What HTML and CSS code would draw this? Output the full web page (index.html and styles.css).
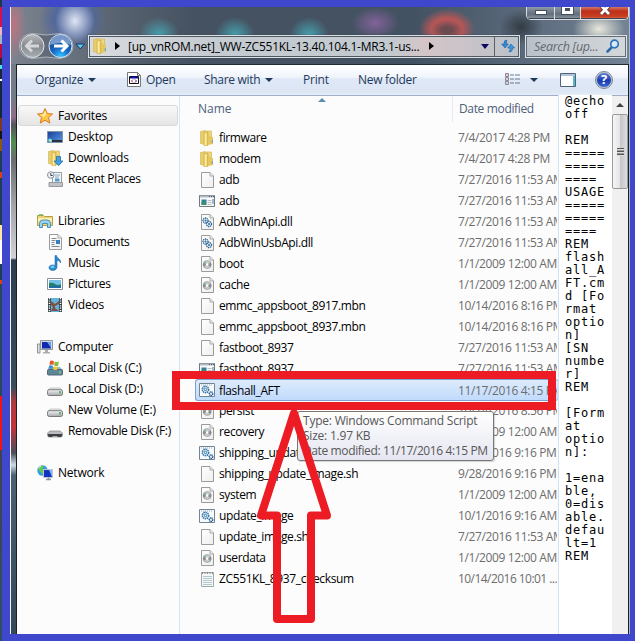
FILE: index.html
```html
<!DOCTYPE html>
<html lang="en">
<head>
<meta charset="utf-8">
<title>Explorer</title>
<link rel="stylesheet" href="styles.css">
</head>
<body>
<svg class="defs" width="0" height="0">
  <defs>
    <linearGradient id="gold" x1="0" x2="1"><stop offset="0" stop-color="#ecd477"/><stop offset=".45" stop-color="#fff0a8"/><stop offset="1" stop-color="#d9b440"/></linearGradient>
    <linearGradient id="paper" x1="0" y1="0" x2="1" y2="1"><stop offset="0" stop-color="#fff"/><stop offset="1" stop-color="#eee"/></linearGradient>
    <linearGradient id="sky" x1="0" y1="0" x2="1" y2="1"><stop offset="0" stop-color="#173d94"/><stop offset="1" stop-color="#5a9bea"/></linearGradient>
    <radialGradient id="orb" cx=".5" cy=".95" r=".85"><stop offset="0" stop-color="#35c5ff"/><stop offset=".45" stop-color="#1767c4"/><stop offset="1" stop-color="#164087"/></radialGradient>
    <linearGradient id="orbgray" x1="0" y1="0" x2="0" y2="1"><stop offset="0" stop-color="#b5b9bd"/><stop offset=".5" stop-color="#858a8f"/><stop offset="1" stop-color="#a9aeb2"/></linearGradient>
    <linearGradient id="disk" x1="0" y1="0" x2="0" y2="1"><stop offset="0" stop-color="#f4f4f6"/><stop offset="1" stop-color="#a5a7ac"/></linearGradient>
    <symbol id="folder" viewBox="0 0 16 16"><path d="M1.500 1.500 6 .5v14l-4.500-1z" fill="#e8cd6c" stroke="#d2b052" stroke-width=".6"/><path d="M6 1h6.500v12.500H6z" fill="#efd97f" stroke="#cfae4d" stroke-width=".6"/><path d="M5 3l4-1v13.300l-4 .5z" fill="url(#gold)" stroke="#c9a640" stroke-width=".6"/><path d="M12.500 7h1.500v7l-5 1V4z" fill="#e6c75f"/><path d="M13.300 10v3" stroke="#56a4d8"/></symbol>
    <symbol id="file" viewBox="0 0 16 16"><path d="M2.500.5h8.500l3.500 3.500v11.500h-12z" fill="url(#paper)" stroke="#9b9b9b"/><path d="M11 .5v3.500h3.500" fill="#eee" stroke="#a8a8a8"/></symbol>
    <symbol id="app" viewBox="0 0 16 16"><path d="M.5 2.500h15v11H.5z" fill="#fafafa" stroke="#6e7980"/><path d="M1 3.500h14" stroke="#b4bdc6" stroke-width="2"/><path d="M10 3.500h1m1 0h1m1 0h1" stroke="#556"/><path d="M2.500 6.500h5v5.500h-5z" fill="#347e9a"/><path d="M2.500 9h4v3h-4z" fill="#3c8e65"/><path d="M8.500 7.500h4m-4 2h4m-4 2h4" stroke="#bbb"/><path d="M14 6v5" stroke="#3a7db4"/></symbol>
    <symbol id="dll" viewBox="0 0 16 16"><use href="#file"/><g fill="#e8f3fa" stroke="#235c8e"><circle cx="6.500" cy="6.500" r="2.500" stroke-dasharray="1.200 .6" stroke-width="1.300"/><circle cx="10" cy="10" r="2.500" stroke-dasharray="1.200 .6" stroke-width="1.300"/><circle cx="6.500" cy="6.500" r=".6"/><circle cx="10" cy="10" r=".6"/></g></symbol>
    <symbol id="img" viewBox="0 0 16 16"><use href="#file"/><circle cx="8.200" cy="8.500" r="4" fill="#c8cacb" stroke="#999c9c" stroke-width=".7"/><path d="M8 8.500 4.800 6.200a4 4 0 0 0 0 4.500zM8 8.500l3.800-2a4 4 0 0 1-.4 4.500z" fill="#8a908d"/><path d="M8 8 6 5a4 4 0 0 0-1.500 1z" fill="#7fc58a"/><circle cx="8.200" cy="8.500" r="1.300" fill="#fff"/></symbol>
    <symbol id="cmd" viewBox="0 0 16 16"><path d="M.5 1.500h15v13H.5z" fill="#f8fbfd" stroke="#758493"/><path d="M2 3h12" stroke="#9aabba" stroke-dasharray="1 1"/><g fill="#d8ebf6" stroke="#3275a4"><circle cx="6.500" cy="7.500" r="3.200" stroke-width="1.500" stroke-dasharray="1.500 .6"/><circle cx="6.500" cy="7.500" r="1.200" fill="#fff"/><circle cx="12" cy="11.700" r="1.800" stroke="#24548a" stroke-width="1.300" stroke-dasharray="1.200 .4"/></g></symbol>
    <symbol id="txt" viewBox="0 0 16 16"><path d="M2.500 1.500h12v14h-12z" fill="#f3f7f8" stroke="#a2a8aa"/><path d="M3 2h11" stroke="#888" stroke-width="2" stroke-dasharray="1 1.500"/><path d="M4 5.500h9m-9 2h9m-9 2h9m-9 2h9m-9 2h9" stroke="#b4c8d0"/></symbol>
    <symbol id="star" viewBox="0 0 16 16"><path d="M8 .6 10.200 5.500 15.500 6l-4 3.600 1.300 5.500L8 12.200l-4.800 2.900 1.300-5.500L.5 6l5.300-.5z" fill="#ffc646" stroke="#d9791c" stroke-linejoin="round"/><path d="m8 2.500 1.300 3.800L7 9 3 6.700l3.400-.4z" fill="#fff0a6"/></symbol>
    <symbol id="desktop" viewBox="0 0 16 16"><path d="M.5 2.500h15v11H.5z" fill="url(#sky)" stroke="#8394a8"/><path d="M1 12h14" stroke="#28333f" stroke-width="2"/><circle cx="3" cy="11.500" r="2" fill="#59c5e6"/><path d="M2 11h2v2" stroke="#e6f6a0" fill="none"/></symbol>
    <symbol id="down" viewBox="0 0 16 16"><use href="#folder"/><path d="M9.500 6.500h4V11H16l-4.500 4.700L7 11h2.500z" fill="#3f9fe0" stroke="#2067ad" stroke-width=".7"/></symbol>
    <symbol id="recent" viewBox="0 0 16 16"><path d="M5.500 1.500h9v11h-9z" fill="#f5f7f9" stroke="#979da3"/><path d="M2 11.500h13.500v4H2z" fill="#bfc3c7" stroke="#999"/><path d="M8 4h5m-5 2h4" stroke="#7fa7c5"/><path d="M8 7.500h4.500v3H8z" fill="#4d9ed0"/><circle cx="3.800" cy="4" r="3.300" fill="#eef2f6" stroke="#87919b"/><path d="M3.800 2v2.500h2" stroke="#445" fill="none"/></symbol>
    <symbol id="lib" viewBox="0 0 16 16"><path d="M.5 2.500h6l1 1h8v9H.5z" fill="#e9d375" stroke="#b99d49"/><path d="M1 5h14v4H1z" fill="#fff1ad"/><path d="M2 2h4" stroke="#66b84b" stroke-width="1.500"/><path d="M2.500 14.500v-4q0-3.500 3.500-3.500h4q3.500 0 3.500 3.500v4h-3v-4h-5v4z" fill="#9bd3ee" stroke="#4892bb"/></symbol>
    <symbol id="doc" viewBox="0 0 16 16"><use href="#file"/><path d="M4.500 4.500h5m-5 2h4m-4 2h3m-3 2h3m-3 2h8" stroke="#7f8995"/><path d="M9 6h4v4H9z" fill="#377cbc"/></symbol>
    <symbol id="music" viewBox="0 0 16 16"><path d="M8 .5h1.500c.5 3 5 3.500 4 7.500-.5-2-2-2.500-3.500-2.500v6.500c0 4.500-8 4.500-8 .8 0-2.800 3.500-3.500 6-2.300z" fill="#2789ce" stroke="#1b5d9c" stroke-width=".5"/><ellipse cx="5.500" cy="12" rx="2" ry="1.300" fill="#71cbf3"/></symbol>
    <symbol id="pic" viewBox="0 0 16 16"><path d="M.5 2.500h15v11H.5z" fill="#fff" stroke="#888f96"/><path d="M2 4h12v8H2z" fill="#75bfe6"/><path d="M2 7q3-1 6 1t6 0v4H2z" fill="#22845f"/><path d="M2 10q6-1 12 0v2H2z" fill="#236ba6"/></symbol>
    <symbol id="video" viewBox="0 0 16 16"><path d="M1 1h14v14H1z" fill="#333c43"/><path d="M4 1h8v14H4z" fill="#62b3dc"/><path d="M4 4 8 7l4-3v3L8 9v2l4 3H4l2-4-2-2z" fill="#815244"/><path d="M2.500 1v14M13.500 1v14" stroke="#fff" stroke-width="1.500" stroke-dasharray="1.200 1.200"/></symbol>
    <symbol id="pc" viewBox="0 0 16 16"><path d="M.5 5h2.500v9H.5z" fill="#e2e4e6" stroke="#8d9296"/><path d="M3.500 1.500h12v9h-12z" fill="#d5d8dc" stroke="#91969b"/><path d="M5 3h9v6.500H5z" fill="#0f29b0"/><path d="M10 3h4v6z" fill="#699bef"/><path d="M8 11h3v2h2v1.500H6V13h2z" fill="#aaaeb2"/></symbol>
    <symbol id="drive" viewBox="0 0 16 16"><path d="M3 7h10l2.500 2.500H.5z" fill="#ededf0" stroke="#a5a7aa" stroke-width=".6"/><rect x=".5" y="8.700" width="15" height="5.800" rx="1.800" fill="url(#disk)" stroke="#77797d"/><path d="M13 10v2.500" stroke="#36b14b" stroke-width="1.500"/></symbol>
    <symbol id="drivec" viewBox="0 0 16 16"><path d="M3 7h10l2.500 3H.5z" fill="#9abac4"/><rect x=".5" y="9.500" width="15" height="5.500" rx="1" fill="#5c8797" stroke="#567"/><path d="M13 11v2.500" stroke="#84ef75"/><path d="M3 1q2-1 4 .4L6.500 5q-2-1-4 0z" fill="#e9582a"/><path d="M7.800 1.600q2 1 4 0L11.200 5.500q-2 1-4 0z" fill="#82bd39"/><path d="M2 5.800q2-1 4 .2L5.400 9q-2-1-4 0z" fill="#3b91dc"/><path d="M6.800 6.200q2 1 4 0L10.200 9.500q-2 1-4 0z" fill="#f6c431"/></symbol>
    <symbol id="usb" viewBox="0 0 16 16"><path d="M3 8h10l2.500 2v2.500q0 1.500-2 1.500h-11q-2 0-2-1.500V10z" fill="#bbbdc0" stroke="#85878a" stroke-width=".7"/><path d="M1 11h14v1.500q0 1.500-2 1.500h-2l-1-1H6l-1 1H3q-2 0-2-1.500z" fill="#3e4043"/></symbol>
    <symbol id="net" viewBox="0 0 16 16"><circle cx="5.500" cy="5.500" r="5.200" fill="#2e9ee6"/><path d="M1 4q3-5 6-3L5.500 4 8 7 5 9z" fill="#65c94b"/><path d="M1.500 3 4 1" stroke="#d8f7ff"/><path d="M6.500 4.500h9v8h-9z" fill="#1334c0" stroke="#c2c7ce"/><path d="M12 5h3v7z" fill="#83b2f5"/><path d="M9 14.500h5M11.500 12.500v2" stroke="#8c939c" stroke-width="1.500"/></symbol>
  </defs>
</svg>

<div class="shot">
  <div class="wallpaper"></div>
  <div class="frame">
    <div class="window">
      <header class="glass">
        <div class="caption">
          <span class="cap min"><i></i></span><span class="cap max"><i></i></span>
          <span class="cap close"><svg width="12" height="12" viewBox="0 0 12 12"><path d="M2 1.500 10 10M10 1.500 2 10" stroke="#5b3232" stroke-width="4.500"/><path d="M2 1.500 10 10M10 1.500 2 10" stroke="#fff" stroke-width="2.800"/></svg></span>
        </div>
        <div class="navbar">
          <svg class="orbs" width="68" height="28" viewBox="0 0 68 28">
            <path d="M14 1.500q14 3 28 0q13 2 13 12.500T42 26.500q-14-3-28 0Q1.500 25 1.500 14T14 1.500z" fill="#4b5663" fill-opacity=".4" stroke="#d6dce2" stroke-opacity=".6"/>
            <circle cx="14.500" cy="14" r="11.500" fill="url(#orbgray)" stroke="#dfe2e4"/>
            <path d="M21 14H8.500m5.500-5.500L8.500 14l5.500 5.500" fill="none" stroke="#d4d6d8" stroke-width="3"/>
            <circle cx="42.500" cy="14" r="11.500" fill="url(#orb)" stroke="#dce8f4"/>
            <path d="M32 13a10.500 10.500 0 0 1 21 0q-10-4-21 0z" fill="#b6cef0" fill-opacity=".6"/>
            <path d="M36 14h13m-5.500-5.500L49 14l-5.500 5.500" fill="none" stroke="#fff" stroke-width="3"/>
            <path d="M58 12h8.500l-4.200 5z" fill="#65c4ec" stroke="#163b64"/>
          </svg>
          <div class="address">
            <svg class="ic"><use href="#folder"/></svg>
            <i class="crumb"></i><span class="path">[up_vnROM.net]_WW-ZC551KL-13.40.104.1-MR3.1-us...</span><i class="crumb"></i>
            <i class="drop"></i>
            <span class="refresh"><svg width="14" height="14" viewBox="0 0 14 14"><path d="M6 1Q3 1 3 4v1H.6L4 9l3.500-4H5.500V3z" fill="#2d8ad8" stroke="#1c5393" stroke-width=".5"/><path d="M8 13q3.500 0 3.500-3V9h2.200L10 5 6.600 9H9v2z" fill="#3a98e1" stroke="#1c5393" stroke-width=".5"/></svg></span>
          </div>
          <div class="search"><span>Search [up...</span><svg width="14" height="14" viewBox="0 0 14 14"><path d="M6 8 1.500 12.500" stroke="#2d68a8" stroke-width="2.500" stroke-linecap="round"/><circle cx="8.500" cy="5" r="3.800" fill="#d7eaf8" stroke="#2d73bd" stroke-width="1.700"/></svg></div>
        </div>
      </header>

      <div class="client">
        <div class="toolbar">
          <span class="t-org">Organize</span><i class="tri"></i>
          <svg class="openic" width="14" height="15" viewBox="0 0 14 15"><path d="M.5.500h10l3 3v11H.5z" fill="#fff" stroke="#777"/><path d="M10.500.5v3h3" fill="none" stroke="#777"/><path d="M2.500 4.500h9v7h-9z" fill="#fff" stroke="#111"/><path d="M3 5.500h8" stroke="#10109c" stroke-width="2"/><path d="m6 7.500-1.500 1.500L6 10.500" fill="none" stroke="#c22"/><path d="M8 7.500 9.500 9 8 10.500" fill="none" stroke="#22a"/></svg>
          <span class="t-open">Open</span>
          <span class="t-share">Share with</span><i class="tri"></i>
          <span class="t-print">Print</span>
          <span class="t-new">New folder</span>
          <svg class="viewic" width="15" height="13" viewBox="0 0 15 13"><path d="M.5.5h3v3h-3zm0 4h3v3h-3zm0 4h3v3h-3z" fill="#fff" stroke="#858b98"/><path d="M1.500 2h1m-1 4h1m-1 4h1" stroke="#b33"/><path d="M5 2h4m1 0h5M5 6h4m1 0h5M5 10h4m1 0h5" stroke="#697a94"/></svg>
          <i class="tri"></i>
          <svg class="paneic" width="16" height="14" viewBox="0 0 16 14"><path d="M.5.500h15v13H.5z" fill="#fff" stroke="#4d6380"/><path d="M1 2h14" stroke="#b2c1d5" stroke-width="2"/><path d="M14 3v10" stroke="#55b9c9" stroke-width="2"/></svg>
          <span class="help">?</span>
        </div>

        <div class="body">
          <nav class="side">
            <div class="row head sel"><svg class="ic"><use href="#star"/></svg><span>Favorites</span></div>
            <div class="row"><svg class="ic"><use href="#desktop"/></svg><span>Desktop</span></div>
            <div class="row"><svg class="ic"><use href="#down"/></svg><span>Downloads</span></div>
            <div class="row tight"><svg class="ic"><use href="#recent"/></svg><span>Recent Places</span></div>
            <div class="row head gap"><svg class="ic"><use href="#lib"/></svg><span>Libraries</span></div>
            <div class="row tight"><svg class="ic"><use href="#doc"/></svg><span>Documents</span></div>
            <div class="row"><svg class="ic"><use href="#music"/></svg><span>Music</span></div>
            <div class="row tight"><svg class="ic"><use href="#pic"/></svg><span>Pictures</span></div>
            <div class="row"><svg class="ic"><use href="#video"/></svg><span>Videos</span></div>
            <div class="row head gap"><svg class="ic"><use href="#pc"/></svg><span>Computer</span></div>
            <div class="row"><svg class="ic"><use href="#drivec"/></svg><span>Local Disk (C:)</span></div>
            <div class="row"><svg class="ic"><use href="#drive"/></svg><span>Local Disk (D:)</span></div>
            <div class="row"><svg class="ic"><use href="#drive"/></svg><span>New Volume (E:)</span></div>
            <div class="row tight"><svg class="ic"><use href="#usb"/></svg><span>Removable Disk (F:)</span></div>
            <div class="row head gap"><svg class="ic"><use href="#net"/></svg><span>Network</span></div>
          </nav>

          <main class="files">
            <div class="cols"><span class="c-name">Name</span><i class="sort"></i><span class="c-date">Date modified</span></div>
            <div class="file"><svg class="ic"><use href="#folder"/></svg><span class="n">firmware</span><span class="d">7/4/2017 4:28 PM</span></div>
            <div class="file"><svg class="ic"><use href="#folder"/></svg><span class="n">modem</span><span class="d">7/4/2017 4:28 PM</span></div>
            <div class="file"><svg class="ic"><use href="#file"/></svg><span class="n">adb</span><span class="d">7/27/2016 11:53 AM</span></div>
            <div class="file"><svg class="ic"><use href="#app"/></svg><span class="n">adb</span><span class="d">7/27/2016 11:53 AM</span></div>
            <div class="file"><svg class="ic"><use href="#dll"/></svg><span class="n">AdbWinApi.dll</span><span class="d">7/27/2016 11:53 AM</span></div>
            <div class="file"><svg class="ic"><use href="#dll"/></svg><span class="n">AdbWinUsbApi.dll</span><span class="d">7/27/2016 11:53 AM</span></div>
            <div class="file"><svg class="ic"><use href="#img"/></svg><span class="n">boot</span><span class="d">1/1/2009 12:00 AM</span></div>
            <div class="file"><svg class="ic"><use href="#img"/></svg><span class="n">cache</span><span class="d">1/1/2009 12:00 AM</span></div>
            <div class="file"><svg class="ic"><use href="#file"/></svg><span class="n">emmc_appsboot_8917.mbn</span><span class="d">10/14/2016 8:16 PM</span></div>
            <div class="file"><svg class="ic"><use href="#file"/></svg><span class="n">emmc_appsboot_8937.mbn</span><span class="d">10/14/2016 8:16 PM</span></div>
            <div class="file"><svg class="ic"><use href="#file"/></svg><span class="n">fastboot_8937</span><span class="d">7/27/2016 11:53 AM</span></div>
            <div class="file"><svg class="ic"><use href="#app"/></svg><span class="n">fastboot_8937</span><span class="d">7/27/2016 11:53 AM</span></div>
            <div class="file picked"><svg class="ic"><use href="#cmd"/></svg><span class="n">flashall_AFT</span><span class="d">11/17/2016 4:15 PM</span></div>
            <div class="file"><svg class="ic"><use href="#img"/></svg><span class="n">persist</span><span class="d">10/14/2016 8:56 PM</span></div>
            <div class="file"><svg class="ic"><use href="#img"/></svg><span class="n">recovery</span><span class="d">1/1/2009 12:00 AM</span></div>
            <div class="file"><svg class="ic"><use href="#cmd"/></svg><span class="n">shipping_update_image</span><span class="d">9/28/2016 9:16 PM</span></div>
            <div class="file"><svg class="ic"><use href="#file"/></svg><span class="n">shipping_update_image.sh</span><span class="d">9/28/2016 9:16 PM</span></div>
            <div class="file"><svg class="ic"><use href="#img"/></svg><span class="n">system</span><span class="d">1/1/2009 12:00 AM</span></div>
            <div class="file"><svg class="ic"><use href="#cmd"/></svg><span class="n">update_image</span><span class="d">10/1/2016 9:16 AM</span></div>
            <div class="file"><svg class="ic"><use href="#file"/></svg><span class="n">update_image.sh</span><span class="d">7/27/2016 11:53 AM</span></div>
            <div class="file"><svg class="ic"><use href="#img"/></svg><span class="n">userdata</span><span class="d">1/1/2009 12:00 AM</span></div>
            <div class="file"><svg class="ic"><use href="#txt"/></svg><span class="n">ZC551KL_8937_checksum</span><span class="d snug">10/14/2016 10:01 ...</span></div>
          </main>

<pre class="preview">@echo
off

REM
=====
=====
====
USAGE
=====
=====
====
REM
flash
all_A
FT.cm
d [Fo
rmat
optio
n]
[SN
numbe
r]
REM

[Form
at
optio
n]:

1=ena
ble,
0=dis
able.
defau
lt=1
REM</pre>
          <div class="scroll"><i class="up"></i><div class="thumb"><i></i></div></div>
        </div>
      </div>
    </div>
  </div>

  <div class="tip"><div>Type: Windows Command Script</div><div>Size: 1.97 KB</div><div class="long">Date modified: 11/17/2016 4:15 PM</div></div>
  <svg class="marks" width="635" height="641" viewBox="0 0 635 641">
    <path d="M176 375H552V406H176z"/>
    <path d="M294 413 261 515.500H277V619H311V515.500H327z" stroke-linejoin="round"/>
  </svg>
</div>
</body>
</html>
```
FILE: styles.css
```css
* { box-sizing: border-box; }
body { margin: 0; font: 12px/15px "Open Sans", "Noto Sans", sans-serif; color: #000; }
i { display: block; font-style: normal; flex: none; }
svg { display: block; flex: none; }
span { white-space: nowrap; }
.defs { position: absolute; }
.ic { width: 16px; height: 16px; }

.shot { position: relative; display: flex; width: 635px; height: 641px; overflow: hidden; }
.wallpaper {
  width: 2px;
  background: linear-gradient(#223848 0 7px, #d3124c 7px 27px, #f7b3c4 27px 35px, #a5b6c8 35px 44px, #b80b41 44px 58px, #16283a 58px 65px, #46e4ef 65px 69px, #16283a 69px 79px, #fff 79px 81px, #14283c 81px 118px, #7a3a20 118px 131px, #151515 131px 139px, #8a5a0c 139px 151px, #1f3c52 151px 172px, #d8410f 172px 178px, #1f3c52 178px 225px, #ffe9a0 225px 240px, #fff 240px 264px, #1f3c52 264px 280px, #d8410f 280px 284px, #2a4759 284px 396px, #f01414 396px 450px, #40424e 450px, #2c5063);
}
.frame { flex: 1; display: flex; border: solid #3f48cc; border-width: 7px 5px 7px 8px; }
.window { flex: 1; min-width: 0; display: flex; flex-direction: column; border-left: 1px solid #f4f4f6; border-right: 1px solid #aeb9c5; background: linear-gradient(#737b86 0 90px, #8c6e88 110px, #52565c 118px, #548d51 136px, #6a6d70 152px, #a4a6aa 200px, #d2d2d8 251px, #2c3e50 253px, #3a4d5d 380px, #ae3a3e 395px, #c3343a 420px, #4a4e5c 446px, #d0dde2 458px, #4c6273 468px, #33495a); }

.glass {
  height: 57px; display: flex; flex-direction: column;
  background:
    radial-gradient(ellipse 12px 34px at 3px 18px, #bb7480, transparent),
    radial-gradient(ellipse 20px 22px at 64px 14px, #dfe6f4, transparent),
    radial-gradient(ellipse 34px 30px at 62px 12px, #51679c 50%, transparent),
    radial-gradient(ellipse 20px 18px at 148px 28px, #48a0ae, transparent),
    radial-gradient(ellipse 20px 18px at 224px 28px, #48a0ae, transparent),
    radial-gradient(ellipse 20px 18px at 298px 28px, #48a0ae, transparent),
    radial-gradient(ellipse 24px 16px at 364px 16px, #83629a, transparent),
    radial-gradient(ellipse 16px 10px at 436px 23px, #6b4a50 30%, transparent),
    radial-gradient(ellipse 28px 20px at 436px 22px, #b45657 55%, transparent),
    radial-gradient(ellipse 22px 18px at 510px 20px, #333b44, transparent),
    radial-gradient(ellipse 26px 18px at 588px 22px, #e8e8dc, transparent),
    linear-gradient(90deg, #7d8490, #56616f 18%, #455261 30%, #435262 65%, #59687a 82%, #748394);
}
.caption { height: 13px; display: flex; align-self: flex-end; width: 103px; border: 1px solid #d8dde3; border-top: 0; border-radius: 0 0 5px 5px; overflow: hidden; }
.cap { width: 28px; display: flex; justify-content: center; background: linear-gradient(#8e99a6, #626e7b 60%, #909ba8); border-right: 1px solid #d8dde3; box-shadow: inset 0 -1px #3b4652; }
.cap.max { width: 26px; }
.cap.close { flex: 1; border: 0; background: linear-gradient(#cf7968, #bd2f17 35%, #c94024 80%, #de7c5c); }
.cap.close svg { margin-top: -3px; }
.min i { width: 12px; height: 5px; margin-top: 3px; background: #fff; border: 1px solid #454f5b; }
.max i { width: 11px; height: 9px; margin-top: -2px; border: 3px solid #fff; outline: 1px solid #454f5b; background: #454f5b; }
.navbar { display: flex; align-items: center; height: 28px; margin-top: 12px; padding-left: 7px; }
.address { display: flex; align-items: center; height: 23px; flex: 0 0 432px; margin-left: 2px; padding-left: 3px; border: 1px solid #dce1e6; outline: 1px solid #4e5964; outline-offset: -2px; background: linear-gradient(90deg, #d8dbdf, #c4cbd1 30%, #c2c9cf 70%, #d4c5c7 78%, #bbc2c9); box-shadow: 0 0 1px #303a44; font-size: 12px; }
.address .ic { margin-right: 7px; }
.crumb { border: solid transparent; border-width: 4px 0 4px 5px; border-left-color: #000; }
.path { width: 292px; margin: 0 9px 0 8px; letter-spacing: -.25px; }
.drop { margin-left: 47px; border: solid transparent; border-width: 5px 4px 0; border-top-color: #0a0a60; }
.refresh { height: 21px; margin-left: 5px; padding-left: 6px; display: flex; align-items: center; border-left: 1px solid #55606b; }
.search { display: flex; align-items: center; justify-content: space-between; width: 102px; height: 23px; margin-left: 5px; padding: 0 6px 0 8px; border: 1px solid #dce1e6; outline: 1px solid #626d78; outline-offset: -2px; background: linear-gradient(90deg, #b9c0c8, #d4d8da); color: #626a72; font-size: 12.500px; font-style: italic; letter-spacing: -.3px; }

.client { flex: 1; min-height: 0; margin-left: 5px; border-left: 1px solid #17202b; border-top: 1px solid #222c37; border-right: 1px solid #17202b; background: #fcfcfc; display: flex; flex-direction: column; }
.toolbar { display: flex; align-items: center; height: 31px; padding: 0 0 1px 18px; color: #1e395b; border-bottom: 1px solid #a0afc8; background: linear-gradient(#fff, #f0f5fc 12px, #dfe8f6 14px, #dce6f4 26px, #e4edf8); }
.toolbar span { flex: none; }
.tri { border: solid transparent; border-width: 4.500px 4px 0; border-top-color: #1e395b; }
.t-org { width: 53px; letter-spacing: -.25px; }
.t-open { width: 58px; letter-spacing: -.3px; }
.t-share { width: 61px; letter-spacing: -.3px; }
.t-print { width: 55px; margin-left: 30px; letter-spacing: -.2px; }
.t-new { width: 147px; letter-spacing: -.28px; }
.openic { margin: 0 5px 0 31px; }
.viewic { margin-right: 10px; }
.paneic { margin-left: 22px; }
.help { display: flex; align-items: center; justify-content: center; width: 16px; height: 16px; margin-left: 20px; border: 1.500px solid #b4b9c4; outline: 1px solid #7a8393; border-radius: 50%; background: linear-gradient(#6080d6, #1a3cae 55%, #3c69dc); color: #fff; font-weight: 700; font-size: 13px; }

.body { flex: 1; min-height: 0; display: flex; }
.side { width: 163px; padding: 9px 1px 0; border-right: 1px solid #d6e5f5; }
.row { display: flex; align-items: center; height: 21px; padding-left: 29px; letter-spacing: -.2px; }
.row span { margin-left: 5px; }
.row.tight { letter-spacing: -.3px; }
.row.head { padding-left: 19px; }
.row.gap { margin-top: 21px; }
.row.sel { padding-left: 18px; border: 1px solid #d9d9d9; border-radius: 3px; background: linear-gradient(#f8f8f8, #e5e5e5); }
.files { width: 378px; padding-left: 15px; overflow: hidden; }
.cols { display: flex; height: 31px; margin-left: 3px; color: #4c607a; line-height: 26px; }
.c-name { width: 120px; }
.sort { width: 8px; height: 4px; margin-top: 2px; border: solid transparent; border-width: 0 4px 4px; border-bottom-color: #5a8caf; }
.c-date { height: 26px; margin-left: 126px; padding-left: 6px; border-left: 1px solid #dfeaf6; letter-spacing: -.35px; }
.file { display: flex; align-items: center; height: 21px; padding-left: 3px; border: 1px solid transparent; border-right: 0; }
.file .n { width: 239px; margin-left: 4px; letter-spacing: -.38px; }
.file .d { width: 99px; overflow: hidden; color: #6d6d6d; letter-spacing: -.37px; }
.file .d.snug { letter-spacing: -.55px; }
.file.picked { height: 22px; margin-bottom: -1px; border-color: #7da2ce; border-radius: 3px; background: linear-gradient(#dcebfc, #c1dbfc); }
.preview { margin: -1px 0 0; width: 54px; padding: 0 0 0 6px; border-left: 1px solid #d1e2f3; background: #fff; font: 12px/13px "DejaVu Sans Mono", monospace; letter-spacing: .78px; }
.scroll { flex: 1; background: #f0f0f0; padding-top: 7px; }
.up { margin: 0 auto 7px; width: 8px; height: 4px; border: solid transparent; border-width: 0 4px 4px; border-bottom-color: #444; }
.thumb { height: 75px; display: flex; justify-content: center; align-items: center; border: 1px solid #9a9a9a; border-radius: 2px; background: linear-gradient(90deg, #f6f6f6, #e4e4e6 50%, #c5c6c9 52%, #dcdde0); }
.thumb i { width: 7px; height: 8px; background: repeating-linear-gradient(#555 0 1px, #ddd 1px 2px, #999 2px 3px); }

.tip { position: absolute; left: 297px; top: 411px; width: 197px; height: 50px; padding: 1px 5px; border: 1px solid #767676; border-radius: 3px; background: linear-gradient(#fff, #e5e6f1); color: #575757; box-shadow: 1px 1px 1px #9996; white-space: nowrap; letter-spacing: -.22px; }
.tip .long { letter-spacing: -.38px; }
.marks { position: absolute; left: 0; top: 0; }
.marks path { fill: none; stroke: #ed1c24; stroke-width: 8; }
```
